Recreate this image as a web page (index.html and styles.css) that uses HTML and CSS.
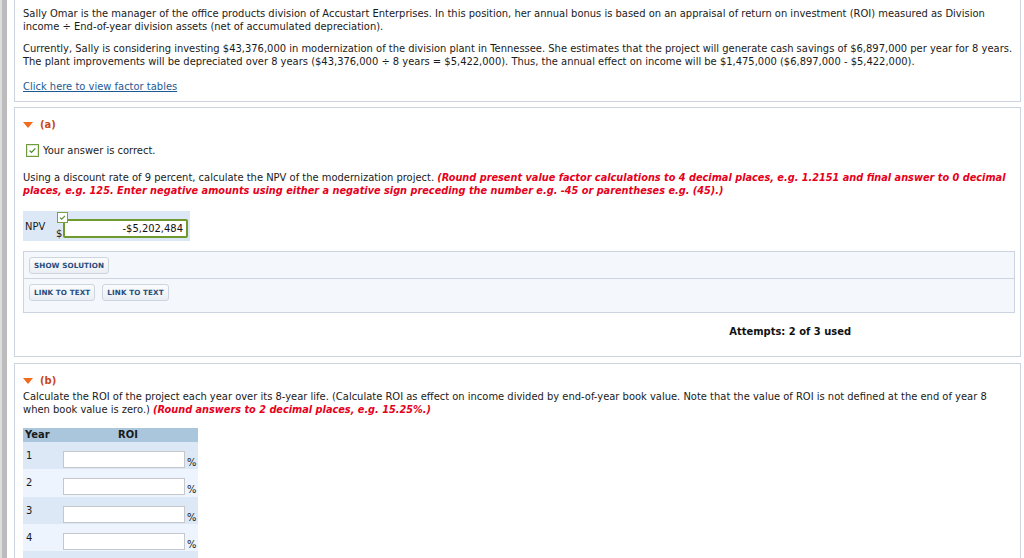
FILE: index.html
```html
<!DOCTYPE html>
<html lang="en">
<head>
<meta charset="utf-8">
<title>Accustart Enterprises – ROI</title>
<link rel="stylesheet" href="styles.css">
</head>
<body>
<div class="page">
  <div class="sidebar"></div>
  <div class="main">
    <div class="panel panel-top">
      <p class="text lines">Sally Omar is the manager of the office products division of Accustart Enterprises. In this position, her annual bonus is based on an appraisal of return on investment (ROI) measured as Division<br>income ÷ End-of-year division assets (net of accumulated depreciation).</p>
      <p class="text lines gap9">Currently, Sally is considering investing $43,376,000 in modernization of the division plant in Tennessee. She estimates that the project will generate cash savings of $6,897,000 per year for 8 years.<br>The plant improvements will be depreciated over 8 years ($43,376,000 ÷ 8 years = $5,422,000). Thus, the annual effect on income will be $1,475,000 ($6,897,000 - $5,422,000).</p>
      <p class="text gap12"><a class="link" href="#">Click here to view factor tables</a></p>
    </div>

    <div class="panel part part-a">
      <div class="part-head"><span class="tri"></span><span class="part-label">(a)</span></div>
      <div class="correct">
        <svg class="check-box" width="13" height="13" viewBox="0 0 13 13"><rect x="0.5" y="0.5" width="12" height="12" fill="#ffffff" stroke="#6f9a3d"/><rect x="1.5" y="1.5" width="10" height="10" fill="none" stroke="#dfe9d3"/><path d="M3.6 6.6 L5.5 8.4 L9.4 4.4" fill="none" stroke="#4f8a2a" stroke-width="1.3"/></svg>
        <span>Your answer is correct.</span>
      </div>
      <p class="text lines question">Using a discount rate of 9 percent, calculate the NPV of the modernization project. <em class="hint">(Round present value factor calculations to 4 decimal places, e.g. 1.2151 and final answer to 0 decimal<br>places, e.g. 125. Enter negative amounts using either a negative sign preceding the number e.g. -45 or parentheses e.g. (45).)</em></p>
      <div class="npv-box">
        <span class="npv-label">NPV</span>
        <div class="npv-field">
          <svg class="mini-check" width="11" height="11" viewBox="0 0 11 11"><rect x="0.5" y="0.5" width="10" height="10" fill="#ffffff" stroke="#7aa046"/><path d="M3 5.6 L4.7 7.2 L8 3.8" fill="none" stroke="#5a9130" stroke-width="1.2"/></svg>
          <span class="dollar">$</span>
          <div class="npv-input">-$5,202,484</div>
        </div>
      </div>
      <div class="solution">
        <div class="sol-row"><span class="btn">SHOW SOLUTION</span></div>
        <div class="sol-row sol-links"><span class="btn">LINK TO TEXT</span><span class="btn">LINK TO TEXT</span></div>
      </div>
      <div class="attempts">Attempts: 2 of 3 used</div>
    </div>

    <div class="panel part part-b">
      <div class="part-head"><span class="tri"></span><span class="part-label">(b)</span></div>
      <p class="text lines question-b">Calculate the ROI of the project each year over its 8-year life. (Calculate ROI as effect on income divided by end-of-year book value. Note that the value of ROI is not defined at the end of year 8<br>when book value is zero.) <em class="hint">(Round answers to 2 decimal places, e.g. 15.25%.)</em></p>
      <table class="roi">
        <thead>
          <tr><th class="c-year">Year</th><th class="c-roi">ROI</th></tr>
        </thead>
        <tbody>
          <tr><td class="c-year">1</td><td class="c-roi"><span class="roi-input"></span><span class="pct">%</span></td></tr>
          <tr><td class="c-year">2</td><td class="c-roi"><span class="roi-input"></span><span class="pct">%</span></td></tr>
          <tr><td class="c-year">3</td><td class="c-roi"><span class="roi-input"></span><span class="pct">%</span></td></tr>
          <tr><td class="c-year">4</td><td class="c-roi"><span class="roi-input"></span><span class="pct">%</span></td></tr>
          <tr><td class="c-year">5</td><td class="c-roi"><span class="roi-input"></span><span class="pct">%</span></td></tr>
        </tbody>
      </table>
    </div>
  </div>
</div>
</body>
</html>
```

FILE: styles.css
```css
html {
  overflow: hidden;
}
body {
  margin: 0;
  background: #ffffff;
  font-family: Verdana, "DejaVu Sans", sans-serif;
  font-size: 9.95px;
  line-height: 13px;
  color: #1a1a1a;
}
.page {
  display: flex;
  min-height: 558px;
}
.sidebar {
  width: 7px;
  flex: none;
  background: linear-gradient(to right, #dedede 0, #dedede 2px, #bcbcbc 2px, #bcbcbc 7px);
}
.main {
  flex: 1;
  padding-left: 7px;
  padding-right: 3px;
}
.panel {
  border: 1px solid #cbd4df;
  background: #ffffff;
  padding: 0 5px 0 8px;
}
.panel-top {
  border-top: none;
  padding-top: 7px;
  padding-bottom: 8px;
}
.text {
  margin: 0;
}
.lines {
  white-space: nowrap;
}
.gap9 { margin-top: 9px; }
.gap12 { margin-top: 12px; }
.link {
  color: #1d5a94;
  text-decoration: underline;
}
.part {
  margin-top: 5px;
}
.part-a {
  padding-top: 10px;
  padding-bottom: 18px;
}
.part-b {
  margin-top: 6px;
  padding-top: 10px;
  padding-bottom: 0;
}
.part-head {
  display: flex;
  align-items: center;
  height: 13px;
}
.tri {
  width: 0;
  height: 0;
  border-left: 5px solid transparent;
  border-right: 5px solid transparent;
  border-top: 6px solid #f26a1b;
  margin-right: 7px;
}
.part-label {
  font-weight: bold;
  color: #c9471b;
}
.correct {
  display: flex;
  align-items: center;
  margin-top: 13px;
  padding-left: 3px;
  height: 13px;
}
.check-box {
  margin-right: 4px;
}
.question {
  margin-top: 14px;
}
.hint {
  color: #e6001b;
  font-weight: bold;
  font-style: italic;
  font-size: 9.75px;
}
.npv-box {
  display: flex;
  align-items: flex-start;
  margin-top: 14px;
  width: 167px;
  height: 30px;
  box-sizing: border-box;
  padding-left: 2px;
  background: #dce8f6;
}
.npv-label {
  width: 31px;
  margin-top: 9px;
}
.npv-field {
  position: relative;
  display: flex;
  align-items: flex-end;
  margin-top: 8px;
  height: 19px;
}
.mini-check {
  position: absolute;
  left: 1px;
  top: -7px;
}
.dollar {
  width: 7px;
  margin-bottom: -2px;
}
.npv-input {
  width: 125px;
  height: 19px;
  box-sizing: border-box;
  border: 2px solid #6e9a2e;
  border-radius: 2px;
  background: #ffffff;
  text-align: right;
  padding-right: 3px;
  line-height: 15px;
  color: #111111;
}
.solution {
  margin-top: 10px;
  border: 1px solid #cbd4df;
  background: #f4f7fb;
}
.sol-row {
  display: flex;
  gap: 7px;
  padding: 5px 5px 4px;
  height: 17px;
}
.sol-row + .sol-row {
  border-top: 1px solid #cbd4df;
  height: 24px;
}
.btn {
  display: inline-flex;
  align-items: center;
  height: 15px;
  padding: 0 4px;
  border: 1px solid #cdd5df;
  border-radius: 3px;
  background: linear-gradient(#fbfcfd, #eaeef4);
  color: #284c7c;
  font-size: 7.2px;
  font-weight: bold;
  letter-spacing: 0.1px;
}
.attempts {
  margin-top: 12px;
  text-align: right;
  padding-right: 164px;
  font-weight: bold;
  color: #111111;
}
.question-b {
  margin-top: 3px;
}
.roi {
  margin-top: 12px;
  border-collapse: collapse;
  width: 175px;
  line-height: 13px;
}
.roi th {
  background: #a9c6dd;
  height: 14px;
  padding: 0;
  font-weight: bold;
  line-height: 14px;
}
.roi th.c-year {
  text-align: left;
  padding-left: 2px;
  width: 37px;
}
.roi th.c-roi {
  text-align: center;
  padding-left: 4px;
  padding-right: 8px;
}
.roi td {
  padding: 0;
  vertical-align: top;
}
.roi tbody tr {
  height: 27.3px;
}
.roi tbody tr:nth-child(odd) { background: #dce8f6; }
.roi tbody tr:nth-child(even) { background: #edf4fd; }
.roi td.c-year {
  padding-left: 3px;
  padding-top: 7px;
}
.roi td.c-roi {
  padding-top: 9px;
}
.roi-input {
  display: inline-block;
  vertical-align: bottom;
  width: 122px;
  height: 17px;
  box-sizing: border-box;
  border: 1px solid #c4c8cc;
  background: #ffffff;
  margin-left: 1px;
}
.pct {
  display: inline-block;
  vertical-align: bottom;
  margin-left: 2px;
  line-height: 11px;
}
```
